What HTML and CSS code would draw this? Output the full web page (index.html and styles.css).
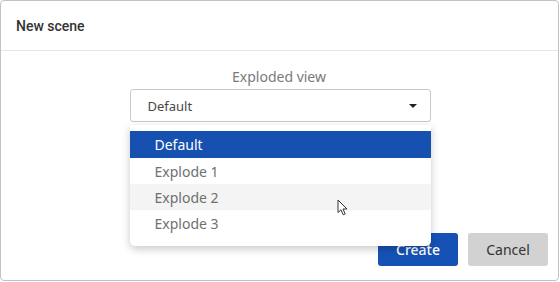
FILE: index.html
```html
<!DOCTYPE html>
<html>
<head>
<meta charset="utf-8">
<link rel="stylesheet" href="styles.css">
</head>
<body>
<div class="dialog">
  <div class="header">New scene</div>
  <div class="content">
    <div class="label">Exploded view</div>
    <div class="select-wrap">
      <div class="select">
        <span>Default</span>
        <span class="caret"></span>
      </div>
      <ul class="menu">
        <li class="item selected">Default</li>
        <li class="item">Explode 1</li>
        <li class="item hover">Explode 2</li>
        <li class="item">Explode 3</li>
      </ul>
    </div>
  </div>
  <div class="footer">
    <button class="btn primary">Create</button>
    <button class="btn secondary">Cancel</button>
  </div>
  <svg class="cursor" width="12" height="18" viewBox="0 0 12 18">
    <path d="M1 1 L1 13.5 L4 10.8 L6.2 15.8 L8.2 14.9 L6 10 L10 10 Z" fill="#fff" stroke="#333" stroke-width="1" stroke-linejoin="round"/>
  </svg>
</div>
</body>
</html>
```

FILE: styles.css
```css
* { box-sizing: border-box; }
html, body { margin: 0; padding: 0; background: #fff; }
body { font-family: "Noto Sans", "Open Sans", sans-serif; }
.dialog {
  position: relative;
  width: 559px;
  height: 281px;
  border: 1px solid #c2c2c2;
  border-radius: 4px;
  background: #fff;
  display: flex;
  flex-direction: column;
}
.header {
  height: 50px;
  border-bottom: 1px solid #e6e6e6;
  display: flex;
  align-items: center;
  padding-left: 15px;
  font-family: Roboto, "Liberation Sans", sans-serif;
  font-weight: 500;
  font-size: 14px;
  color: #333;
}
.content {
  display: flex;
  flex-direction: column;
  align-items: center;
  padding-top: 16px;
}
.label {
  font-size: 14px;
  line-height: 20px;
  color: #7a7a7a;
  margin-left: -1px;
}
.select-wrap {
  position: relative;
  width: 301px;
  margin-top: 2px;
  margin-left: 1px;
}
.select {
  height: 33px;
  border: 1px solid #c8c8c8;
  border-radius: 3px;
  display: flex;
  align-items: center;
  justify-content: space-between;
  padding: 0 13px 0 17px;
  font-size: 13px;
  color: #484848;
}
.caret {
  width: 0;
  height: 0;
  border-left: 4px solid transparent;
  border-right: 4px solid transparent;
  border-top: 4.5px solid #222;
}
.menu {
  position: absolute;
  top: 36px;
  left: 0;
  width: 301px;
  margin: 0;
  padding: 6px 0 10px;
  list-style: none;
  background: #fff;
  border-radius: 0 0 5px 5px;
  box-shadow: 0 3px 9px rgba(0,0,0,0.22);
  z-index: 2;
}
.item {
  height: 26px;
  display: flex;
  align-items: center;
  padding-left: 25px;
  font-size: 14px;
  color: #707070;
}
.item.selected {
  height: 27px;
  background: #1650b0;
  color: #fff;
}
.item.hover { background: #f4f4f4; }
.footer {
  margin-top: auto;
  display: flex;
  justify-content: flex-end;
  gap: 10px;
  padding: 0 10px 14px 0;
}
.btn {
  height: 33px;
  border: none;
  border-radius: 3px;
  font-family: "Noto Sans", "Open Sans", sans-serif;
  font-size: 14px;
  padding: 0;
  width: 80px;
}
.primary { background: #1652b5; color: #fff; font-weight: 500; }
.secondary { background: #d2d2d2; color: #333; }
.cursor {
  position: absolute;
  left: 336px;
  top: 198px;
  z-index: 3;
}
```
